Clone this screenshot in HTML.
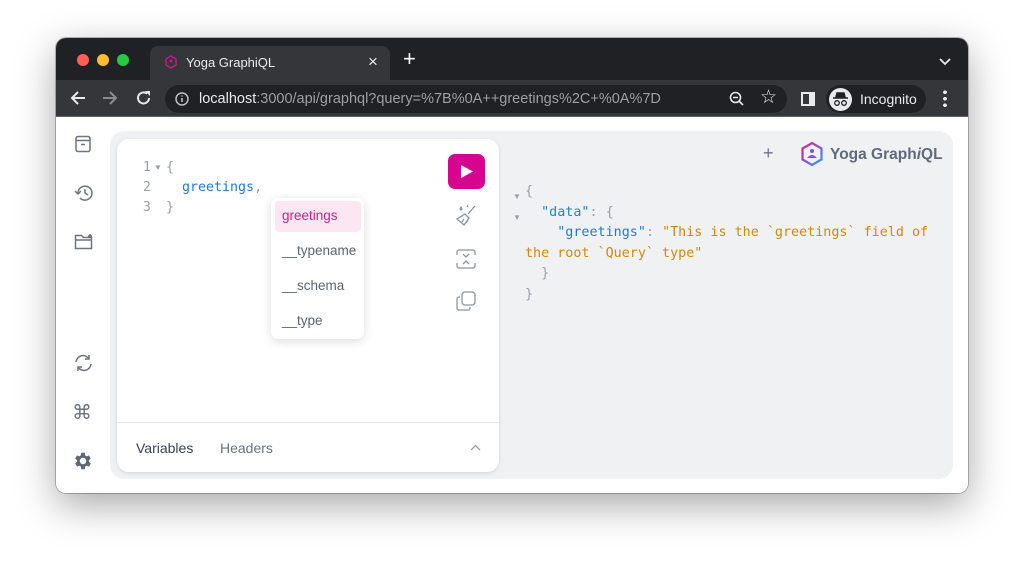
<!DOCTYPE html>
<html><head><style>
*{margin:0;padding:0;box-sizing:border-box}
body{width:1024px;height:568px;background:#fff;position:relative;overflow:hidden;font-family:"Liberation Sans",sans-serif}
.win{position:absolute;left:56px;top:38px;width:912px;height:455px;border-radius:10px;overflow:hidden;box-shadow:0 12px 40px rgba(0,0,0,.35),0 0 0 1px rgba(0,0,0,.25);background:#fff}
.tabs{position:absolute;left:0;top:0;width:912px;height:42px;background:#202124}
.tab{position:absolute;left:94px;top:8px;width:240px;height:34px;background:#35363a;border-radius:8px 8px 0 0}
.tb{position:absolute;left:0;top:42px;width:912px;height:37px;background:#35363a;border-bottom:1px solid #5f6368}
.dot{position:absolute;top:16px;width:12px;height:12px;border-radius:50%}
.abs{position:absolute}
.mono{font-family:"DejaVu Sans Mono","Liberation Mono",monospace;font-size:13px}
</style></head><body>
<div class="win">
 <div class="tabs">
  <div class="dot" style="left:21px;background:#ff5f57"></div>
  <div class="dot" style="left:41px;background:#febc2e"></div>
  <div class="dot" style="left:61px;background:#28c840"></div>
  <div class="tab">
   <svg class="abs" style="left:14px;top:9px" width="14" height="14" viewBox="0 0 14 14"><path d="M7 1l5 3v6l-5 3-5-3V4z" fill="none" stroke="#c8178f" stroke-width="1.4"/><circle cx="7" cy="6" r="1.5" fill="#c8178f"/></svg>
   <div class="abs" style="left:36px;top:9px;color:#e8eaed;font-size:13px">Yoga GraphiQL</div>
   <div class="abs" style="left:218px;top:6px;color:#e8eaed;font-size:17px">×</div>
  </div>
  <div class="abs" style="left:347px;top:10px;color:#fff;font-size:22px;line-height:22px">+</div>
  <svg class="abs" style="left:883px;top:20px" width="12" height="8"><path d="M1 1l5 5 5-5" stroke="#e8eaed" stroke-width="1.8" fill="none"/></svg>
 </div>
 <div class="tb">
  <svg class="abs" style="left:13px;top:10px" width="18" height="16"><path d="M16 8H3M9 2L3 8l6 6" stroke="#e8eaed" stroke-width="2" fill="none"/></svg>
  <svg class="abs" style="left:45px;top:10px" width="18" height="16"><path d="M2 8h13M9 2l6 6-6 6" stroke="#8a8c90" stroke-width="2" fill="none"/></svg>
  <svg class="abs" style="left:79px;top:9px" width="18" height="18"><path d="M14 9a5.5 5.5 0 1 1-2-4.3" stroke="#e8eaed" stroke-width="2" fill="none"/><path d="M10 2h5v5z" fill="#e8eaed"/></svg>
  <div class="abs" style="left:109px;top:5px;width:622px;height:28px;border-radius:14px;background:#202124"></div>
  <svg class="abs" style="left:119px;top:12px" width="14" height="14"><circle cx="7" cy="7" r="6" stroke="#bdc1c6" stroke-width="1.5" fill="none"/><path d="M7 6v4M7 3.5v1" stroke="#bdc1c6" stroke-width="1.6"/></svg>
  <div class="abs" style="left:143px;top:11px;font-size:14.5px;color:#9aa0a6;white-space:nowrap"><span style="color:#e8eaed">localhost</span>:3000/api/graphql?query=%7B%0A++greetings%2C+%0A%7D</div>
  <svg class="abs" style="left:673px;top:11px" width="16" height="16"><circle cx="6.5" cy="6.5" r="5" stroke="#e8eaed" stroke-width="1.6" fill="none"/><path d="M4 6.5h5M10 10l4 4" stroke="#e8eaed" stroke-width="1.6"/></svg>
  <div class="abs" style="left:704px;top:6px;color:#e8eaed;font-size:19px">☆</div>
  <div class="abs" style="left:745px;top:12px;width:14px;height:14px;border:2px solid #e8eaed;border-right-width:6px"></div>
  <div class="abs" style="left:770px;top:5px;width:100px;height:28px;border-radius:14px;background:#202124"></div>
  <div class="abs" style="left:773px;top:8px;width:23px;height:23px;border-radius:50%;background:#e8eaed"></div>
  <svg class="abs" style="left:776px;top:12px" width="17" height="15"><path d="M4 5l1-4h7l1 4zM1 6h15" stroke="#202124" stroke-width="1.5" fill="#202124"/><circle cx="5" cy="11" r="2.3" stroke="#202124" stroke-width="1.3" fill="none"/><circle cx="12" cy="11" r="2.3" stroke="#202124" stroke-width="1.3" fill="none"/></svg>
  <div class="abs" style="left:804px;top:11px;color:#e8eaed;font-size:14px">Incognito</div>
  <div class="abs" style="left:887px;top:9px;width:4px;height:20px;background:radial-gradient(circle,#e8eaed 1.8px,transparent 2px) 0 0/4px 6.5px"></div>
 </div>
 <div class="abs" style="left:0;top:80px;width:912px;height:375px;background:#fff">
  <svg class="abs" style="left:18px;top:17px" width="18" height="18" fill="none" stroke="#6b7385" stroke-width="1.5"><rect x="2" y="1.5" width="14" height="15" rx="2"/><path d="M2 5.5h14M7 9.5h4"/></svg>
  <svg class="abs" style="left:18px;top:66px" width="20" height="18" fill="none" stroke="#6b7385" stroke-width="1.5"><path d="M4 9a7 7 0 1 1 2 5"/><path d="M1 7l3 3 3-3M11 5v4l3 2"/></svg>
  <svg class="abs" style="left:18px;top:115px" width="20" height="17" fill="none" stroke="#6b7385" stroke-width="1.5"><path d="M1.5 2.5h6l2 2h8v11h-16zM1.5 7h16M16 1v4M14 3h4"/></svg>
  <svg class="abs" style="left:18px;top:236px" width="19" height="18" fill="none" stroke="#6b7385" stroke-width="1.5"><path d="M2 8a7 7 0 0 1 13-3M17 10a7 7 0 0 1-13 3M15 1v4h-4M4 17v-4h4"/></svg>
  <div class="abs" style="left:16px;top:282px;font-size:20px;color:#6b7385;font-family:'DejaVu Sans',sans-serif">⌘</div>
  <svg class="abs" style="left:16px;top:332px" width="22" height="22" viewBox="0 0 24 24"><path fill="#5f6779" d="M19.4 13a7.5 7.5 0 0 0 0-2l2.1-1.6-2-3.5-2.5 1a7 7 0 0 0-1.7-1L15 3h-4l-.4 2.9a7 7 0 0 0-1.7 1l-2.5-1-2 3.5L6.6 11a7.5 7.5 0 0 0 0 2l-2.1 1.6 2 3.5 2.5-1a7 7 0 0 0 1.7 1L11 21h4l.4-2.9a7 7 0 0 0 1.7-1l2.5 1 2-3.5zM13 15.5a3.5 3.5 0 1 1 0-7 3.5 3.5 0 0 1 0 7z" transform="translate(-1 0)"/></svg>
  <div class="abs" style="left:54px;top:13px;width:843px;height:348px;border-radius:14px;background:#f0f1f3"></div>
  <div class="abs" style="left:61px;top:21px;width:382px;height:333px;border-radius:12px;background:#fff;box-shadow:0 1px 4px rgba(0,0,0,.12)">
   <div class="abs mono" style="left:26px;top:19px;line-height:20px;color:#9aa0a8">1<br>2<br>3</div>
   <div class="abs" style="left:37px;top:24px;font-size:8px;color:#9aa0a8">▼</div>
   <div class="abs mono" style="left:49px;top:19px;line-height:20px;color:#9aa0a8;white-space:pre;font-size:13.3px">{
  <span style="color:#1f7ad8">greetings</span>,
}</div>
   <div class="abs" style="left:331px;top:15px;width:37px;height:35px;border-radius:7px;background:#d60590"></div>
   <svg class="abs" style="left:342px;top:25px" width="15" height="15"><path d="M2 1l12 6.5L2 14z" fill="#fff"/></svg>
   <svg class="abs" style="left:338px;top:65px" width="22" height="22" fill="none" stroke="#8d95a5" stroke-width="1.3"><path d="M20 2l-7 8M10 10l4 4-5 7-7-6zM5 5l1-2 1 2-1 1zM12 3l.5-1 .5 1M7 18l2-3M11 19l2-3"/></svg>
   <svg class="abs" style="left:339px;top:110px" width="20" height="20" fill="none" stroke="#8d95a5" stroke-width="1.3"><path d="M1 6V3a2 2 0 0 1 2-2h14a2 2 0 0 1 2 2v3M1 14v3a2 2 0 0 0 2 2h14a2 2 0 0 0 2-2v-3M7 5l3 3 3-3M7 15l3-3 3 3"/></svg>
   <svg class="abs" style="left:339px;top:152px" width="20" height="20" fill="none" stroke="#8d95a5" stroke-width="1.3"><rect x="6" y="1" width="13" height="13" rx="3"/><path d="M4 6H3a2 2 0 0 0-2 2v9a2 2 0 0 0 2 2h9a2 2 0 0 0 2-2v-1"/></svg>
   <div class="abs" style="left:0;top:283px;width:382px;height:1px;background:#e6e8ec"></div>
   <div class="abs" style="left:19px;top:301px;font-size:14px;color:#3b4252">Variables</div>
   <div class="abs" style="left:103px;top:301px;font-size:14px;color:#6b7385">Headers</div>
   <svg class="abs" style="left:353px;top:305px" width="11" height="7"><path d="M1 6l4.5-4.5L10 6" stroke="#9aa0a8" stroke-width="1.3" fill="none"/></svg>
  </div>
  <div class="abs" style="left:215px;top:80px;width:93px;height:141px;border-radius:7px;background:#fff;box-shadow:0 2px 10px rgba(0,0,0,.14)">
   <div class="abs" style="left:4px;top:3px;width:86px;height:31px;border-radius:4px;background:#fce6f2"></div>
   <div class="abs" style="left:11px;top:10px;font-size:13.5px;color:#cc2287">greetings</div>
   <div class="abs" style="left:11px;top:45px;font-size:13.5px;color:#5b6476">__typename</div>
   <div class="abs" style="left:11px;top:80px;font-size:13.5px;color:#5b6476">__schema</div>
   <div class="abs" style="left:11px;top:115px;font-size:13.5px;color:#5b6476">__type</div>
  </div>
  <div class="abs" style="left:707px;top:25px;font-size:18px;color:#6b7385">+</div>
  <svg class="abs" style="left:744px;top:23px" width="24" height="26" viewBox="0 0 24 26"><defs><linearGradient id="g" x1="0" y1="0" x2="1" y2="1"><stop offset="0" stop-color="#e21e8b"/><stop offset=".5" stop-color="#8a4fe0"/><stop offset="1" stop-color="#2fa0f0"/></linearGradient></defs><path d="M12 2l9.5 5.5v11L12 24 2.5 18.5v-11z" fill="none" stroke="url(#g)" stroke-width="2.2"/><circle cx="12" cy="10" r="2" fill="#8a4fe0"/><path d="M7 17q5-6 10 0z" fill="#8a4fe0"/></svg>
  <div class="abs" style="left:774px;top:28px;font-size:15.5px;color:#616a7d;font-weight:bold;white-space:nowrap">Yoga Graph<i>i</i>QL</div>
  <div class="abs mono" style="left:469px;top:64px;line-height:20.5px;color:#9aa0a8;white-space:pre;font-size:13.4px">{
  <span style="color:#1f86d0">"data"</span>: {
    <span style="color:#1f7ad8">"greetings"</span>: <span style="color:#d4870c">"This is the `greetings` field of</span>
<span style="color:#d4870c">the root `Query` type"</span>
  }
}</div>
  <div class="abs" style="left:457px;top:69px;font-size:8px;color:#9aa0a8;line-height:20.5px">▼<br>▼</div>
 </div>
</div>
</body></html>
